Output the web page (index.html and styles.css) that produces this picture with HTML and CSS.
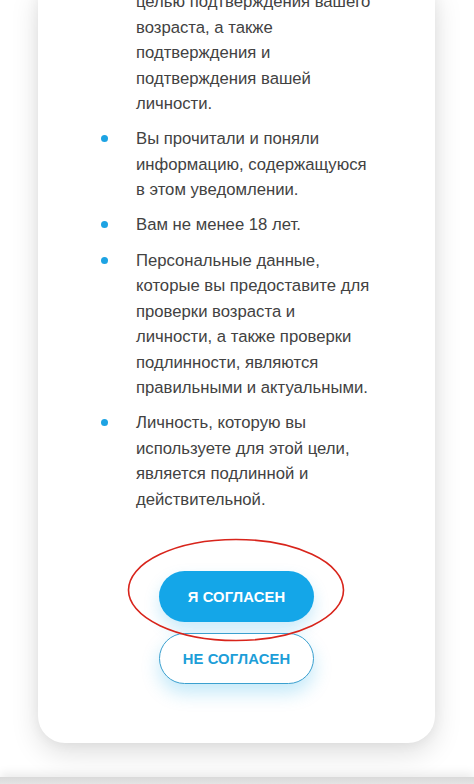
FILE: index.html
```html
<!DOCTYPE html>
<html lang="ru">
<head>
<meta charset="utf-8">
<link rel="stylesheet" href="styles.css">
</head>
<body>
<div class="page">
  <div class="card">
    <ul class="terms">
      <li class="continued">целью подтверждения вашего<br>возраста, а также<br>подтверждения и<br>подтверждения вашей<br>личности.</li>
      <li>Вы прочитали и поняли<br>информацию, содержащуюся<br>в этом уведомлении.</li>
      <li>Вам не менее 18 лет.</li>
      <li>Персональные данные,<br>которые вы предоставите для<br>проверки возраста и<br>личности, а также проверки<br>подлинности, являются<br>правильными и актуальными.</li>
      <li>Личность, которую вы<br>используете для этой цели,<br>является подлинной и<br>действительной.</li>
    </ul>
    <div class="actions">
      <button class="btn btn-primary">Я согласен</button>
      <button class="btn btn-outline">Не согласен</button>
      <svg class="circle" width="220" height="106" viewBox="0 0 220 106" aria-hidden="true">
        <ellipse cx="110" cy="53" rx="107.5" ry="50.5" fill="none" stroke="#d8241b" stroke-width="1.6"/>
      </svg>
    </div>
  </div>
  <div class="bottom-bar"></div>
</div>
</body>
</html>
```

FILE: styles.css
```css
html, body {
  margin: 0;
  padding: 0;
  background: #ffffff;
  overflow: hidden;
}

body {
  font-family: "Liberation Sans", Arial, sans-serif;
  color: #424242;
}

.page {
  width: 474px;
  height: 784px;
  overflow: hidden;
  position: relative;
}

.card {
  margin: -11px 39px 0 38px;
  background: #ffffff;
  border-radius: 0 0 27px 27px;
  box-shadow: 0 10px 28px rgba(0, 0, 0, 0.13), 0 0 14px rgba(0, 0, 0, 0.05);
  padding: 0 0 59px 0;
}

.terms {
  list-style: none;
  margin: 0;
  padding: 0 20px 0 98px;
  font-size: 16.7px;
  line-height: 25.5px;
}

.terms li {
  position: relative;
  margin-bottom: 9.7px;
}

.terms li:last-child {
  margin-bottom: 0;
}

.terms li::before {
  content: "";
  position: absolute;
  left: -35px;
  top: 9px;
  width: 7px;
  height: 7px;
  border-radius: 50%;
  background: #1da3e3;
}

.terms li.continued::before {
  display: none;
}

.actions {
  position: relative;
  margin-top: 59px;
  display: flex;
  flex-direction: column;
  align-items: center;
  gap: 11px;
}

.btn {
  width: 155px;
  height: 51px;
  border-radius: 26px;
  font-family: "Liberation Sans", Arial, sans-serif;
  font-weight: 700;
  font-size: 14.8px;
  letter-spacing: 0.1px;
  text-transform: uppercase;
  cursor: pointer;
  padding: 0;
}

.btn-primary {
  background: #14a6e8;
  color: #ffffff;
  border: none;
  box-shadow: 0 8px 16px rgba(20, 166, 232, 0.22);
}

.btn-outline {
  background: #ffffff;
  color: #1d9ed8;
  border: 1px solid #3ba0cf;
  box-shadow: 0 9px 18px rgba(20, 166, 232, 0.25);
}

.circle {
  position: absolute;
  left: 88px;
  top: -34px;
  pointer-events: none;
}

.bottom-bar {
  margin-top: 34px;
  height: 30px;
  background: linear-gradient(#d9d9d9, #ececec 40%, #efefef);
  box-shadow: 0 -4px 10px rgba(0, 0, 0, 0.08);
}
```
